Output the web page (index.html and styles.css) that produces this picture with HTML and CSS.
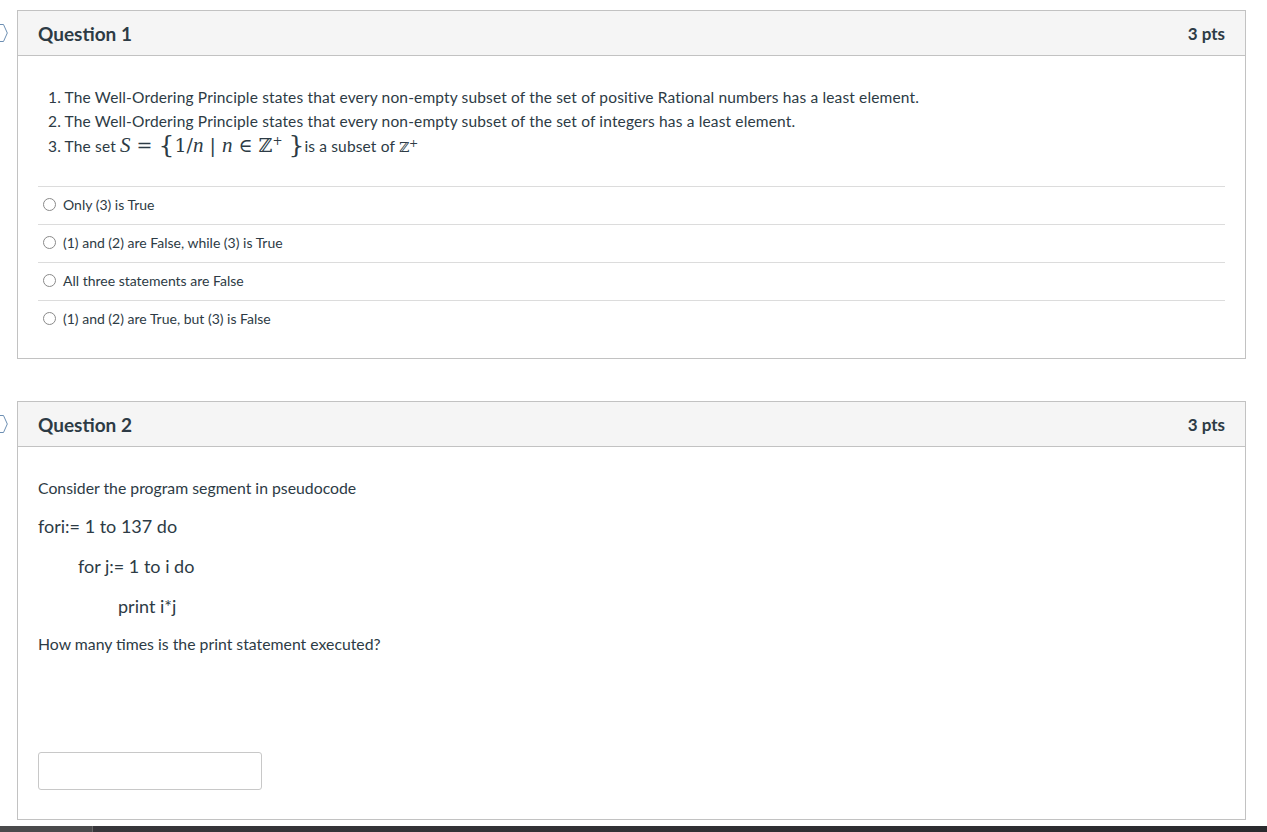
FILE: index.html
```html
<!DOCTYPE html>
<html lang="en">
<head>
    <meta charset="UTF-8">
    <meta name="viewport" content="width=device-width, initial-scale=1.0">
    <title>Quiz</title>
    <link rel="stylesheet" href="styles.css">
</head>
<body>
    <div class="quiz">
        <div class="question-row">
            <div class="flag">
                <svg width="8" height="18" viewBox="0 0 8 18"><path d="M-2 0.5 H3.5 L7.3 9 L3.5 17.5 H-2" fill="none" stroke="#6d8fb3" stroke-width="1"/></svg>
            </div>
            <div class="question">
                <div class="question-header">
                    <span class="question-name">Question 1</span>
                    <span class="points">3 pts</span>
                </div>
                <div class="question-body">
                    <div class="statements">
                        <div class="statement">1. The Well-Ordering Principle states that every non-empty subset of the set of positive Rational numbers has a least element.</div>
                        <div class="statement">2. The Well-Ordering Principle states that every non-empty subset of the set of integers has a least element.</div>
                        <div class="statement">3. The set <span class="math"><i>S</i> = <span class="brace">{</span>1/<i>n</i> | <i>n</i> ∈ ℤ<sup>+</sup> <span class="brace">}</span></span>is a subset of <span class="math small">ℤ<sup>+</sup></span></div>
                    </div>
                    <div class="answers">
                        <label class="answer"><span class="radio"></span>Only (3) is True</label>
                        <label class="answer"><span class="radio"></span>(1) and (2) are False, while (3) is True</label>
                        <label class="answer"><span class="radio"></span>All three statements are False</label>
                        <label class="answer"><span class="radio"></span>(1) and (2) are True, but (3) is False</label>
                    </div>
                </div>
            </div>
        </div>

        <div class="question-row">
            <div class="flag">
                <svg width="8" height="18" viewBox="0 0 8 18"><path d="M-2 0.5 H3.5 L7.3 9 L3.5 17.5 H-2" fill="none" stroke="#6d8fb3" stroke-width="1"/></svg>
            </div>
            <div class="question">
                <div class="question-header">
                    <span class="question-name">Question 2</span>
                    <span class="points">3 pts</span>
                </div>
                <div class="question-body code-question">
                    <p class="text intro">Consider the program segment in pseudocode</p>
                    <p class="code">fori:= 1 to 137 do</p>
                    <p class="code indent-1">for j:= 1 to i do</p>
                    <p class="code indent-2 last-line">print i*j</p>
                    <p class="text">How many times is the print statement executed?</p>
                    <input class="answer-input" type="text">
                </div>
            </div>
        </div>
    </div>
    <div class="footer-bar">
        <div class="footer-left"></div>
    </div>
</body>
</html>
```

FILE: styles.css
```css
body, html {
    margin: 0;
    padding: 0;
    height: 100%;
    overflow: hidden;
    background: #fff;
    font-family: Lato, "Open Sans", sans-serif;
    color: #2d3b45;
}

.quiz {
    padding: 10px 21px 0 0;
}

.question-row {
    display: flex;
    margin-bottom: 42px;
}

.question-row:last-child {
    margin-bottom: 0;
}

.flag {
    width: 17px;
    flex-shrink: 0;
    padding-top: 14px;
}

.flag svg {
    display: block;
    overflow: visible;
}

.question {
    flex: 1;
    border: 1px solid #c2c2c2;
}

.question-header {
    height: 44px;
    background: #f5f5f5;
    border-bottom: 1px solid #c2c2c2;
    display: flex;
    justify-content: space-between;
    align-items: center;
    padding: 0 20px;
}

.question-name {
    font-size: 19px;
    font-weight: bold;
}

.points {
    font-size: 17px;
    font-weight: bold;
}

.question-body {
    padding: 29px 20px 20px;
}

.statements {
    padding-left: 10px;
    margin-bottom: 29px;
    font-size: 15.5px;
    letter-spacing: 0.15px;
}

.statement {
    line-height: 24px;
    height: 24px;
    white-space: nowrap;
}

.math {
    font-family: "DejaVu Serif", "Liberation Serif", serif;
    font-size: 19px;
    letter-spacing: 0;
}

.math i {
    font-family: "Liberation Serif", serif;
    font-size: 21px;
}

.math sup {
    font-size: 12px;
    vertical-align: 7px;
    line-height: 0;
}

.math .brace {
    font-size: 25px;
    vertical-align: -1px;
}

.math.small {
    font-size: 14px;
}

.math.small sup {
    font-size: 11px;
    vertical-align: 5px;
}

.answer {
    display: flex;
    align-items: center;
    height: 37px;
    padding-bottom: 2px;
    box-sizing: border-box;
    height: 38px;
    border-top: 1px solid #dcdcdc;
    font-size: 14px;
    padding-left: 5px;
}

.radio {
    width: 11px;
    height: 11px;
    border: 1px solid #8a8a8a;
    border-radius: 50%;
    margin-right: 7px;
    flex-shrink: 0;
}

.code-question {
    padding: 30px 20px 29px;
}

.code-question p {
    margin: 0 0 16px;
}

.code-question p.intro {
    margin-bottom: 15px;
}

.code-question p.last-line {
    margin-bottom: 15px;
}

.text {
    font-size: 15.8px;
    line-height: 22px;
}

.code {
    font-size: 18px;
    line-height: 24px;
}

.indent-1 {
    padding-left: 40px;
}

.indent-2 {
    padding-left: 80px;
}

.answer-input {
    display: block;
    margin-top: 97px;
    width: 224px;
    height: 38px;
    box-sizing: border-box;
    border: 1px solid #c8c8c8;
    border-radius: 3px;
    font-family: Lato, sans-serif;
}

.footer-bar {
    margin-top: 6px;
    height: 10px;
    background: linear-gradient(to right, #38373b, #2a2a2e);
    display: flex;
}

.footer-left {
    width: 92px;
    background: #4a4a4c;
    border-right: 1px solid #666;
}
```
